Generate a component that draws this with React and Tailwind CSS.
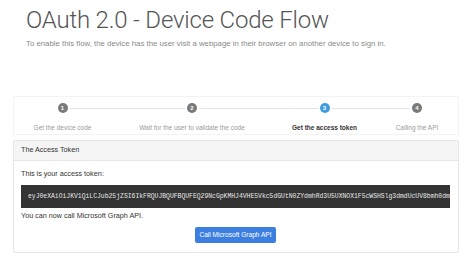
import React from 'react';

const steps = [
  { n: 1, label: 'Get the device code', w: 'w-[97px]' },
  { n: 2, label: 'Wait for the user to validate the code', w: 'w-[162px]' },
  { n: 3, label: 'Get the access token', w: 'w-[103px]', active: true },
  { n: 4, label: 'Calling the API', w: 'w-[82px]' },
];

const token =
  'eyJ0eXAiOiJKV1QiLCJub25jZSI6IkFRQUJBQUFBQUFEQ29NcGpKMHJ4VHE5Vkc5dGUtN0ZYdmhRd3U5UXNOX1F5cWSHSlg3dmdUcUV8bmh0dmxxYWlrT0hPcWZ';

function Step({ step, first, last }) {
  return (
    <div className={`${step.w} flex flex-col items-center`}>
      <div className="flex w-full items-center">
        <div className={`h-px flex-1 mr-[2px] ${first ? 'bg-transparent' : 'bg-[#e4e4e4]'}`}></div>
        <div
          className={`flex h-[10px] w-[10px] items-center justify-center rounded-full text-[6px] font-bold leading-none text-white ${
            step.active ? 'bg-[#3e9de0]' : 'bg-[#7a7a7a]'
          }`}
        >
          {step.n}
        </div>
        <div className={`h-px flex-1 ml-[2px] ${last ? 'bg-transparent' : 'bg-[#e4e4e4]'}`}></div>
      </div>
      <div
        className={`mt-[12px] whitespace-nowrap text-[6.5px] leading-none ${
          step.active ? 'font-bold text-[#333]' : 'text-[#9a9a9a]'
        }`}
      >
        {step.label}
      </div>
    </div>
  );
}

export default function App() {
  return (
    <div className="h-[263px] w-[474px] overflow-hidden bg-white font-['Liberation_Sans',Arial,sans-serif]">
      {/* Heading */}
      <div className="pl-[26px] pt-[5px]">
        <h1 className="font-['Roboto',sans-serif] text-[24px] font-light leading-[30px] tracking-[-0.2px] text-[#555]">
          OAuth 2.0 - Device Code Flow
        </h1>
        <p className="mt-[4px] text-[7.8px] leading-[10px] text-[#8a8a8a]">
          To enable this flow, the device has the user visit a webpage in their browser on another device to sign in.
        </p>
      </div>

      <div className="mx-[13px] mt-[47px] w-[446px]">
        {/* Stepper */}
        <div className="flex h-[39px] border border-[#f3f3f3] pt-[6px]">
          {steps.map((s, i) => (
            <Step key={s.n} step={s} first={i === 0} last={i === steps.length - 1} />
          ))}
        </div>

        {/* Access token card */}
        <div className="mt-[5px] rounded-[2px] border border-[#e6e6e6]">
          <div className="flex h-[20px] items-center border-b border-[#e6e6e6] bg-[#f5f5f5] px-[7px] text-[7.2px] text-[#333]">
            The Access Token
          </div>
          <div className="pb-[9px] pl-[7px] pr-[8px] pt-[8px]">
            <p className="text-[7.2px] leading-[10px] text-[#333]">This is your access token:</p>
            <div className="mt-[6px] flex h-[23px] items-center overflow-hidden whitespace-nowrap bg-[#333] px-[7px] font-['Liberation_Mono',monospace] text-[6.4px] text-[#e8e8e8]">
              {token}
            </div>
            <p className="mt-[3px] text-[7.2px] leading-[10px] text-[#333]">You can now call Microsoft Graph API.</p>
            <div className="mt-[6px] flex justify-center">
              <button className="h-[16px] w-[81px] rounded-[2px] bg-[#3d7fe0] text-[6.6px] text-white">
                Call Microsoft Graph API
              </button>
            </div>
          </div>
        </div>
      </div>
    </div>
  );
}
